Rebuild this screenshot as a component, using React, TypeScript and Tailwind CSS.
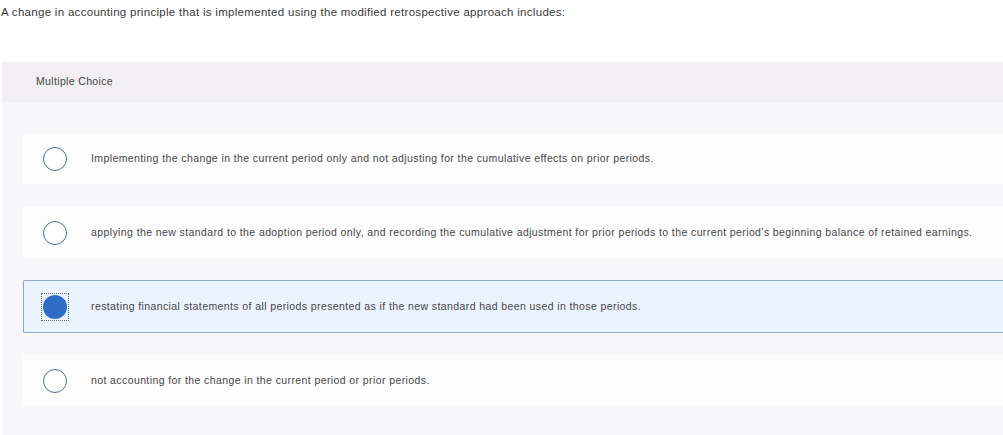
import React from "react";

const options = [
  "Implementing the change in the current period only and not adjusting for the cumulative effects on prior periods.",
  "applying the new standard to the adoption period only, and recording the cumulative adjustment for prior periods to the current period’s beginning balance of retained earnings.",
  "restating financial statements of all periods presented as if the new standard had been used in those periods.",
  "not accounting for the change in the current period or prior periods.",
];

const selected = 2;

function Radio({ checked }: { checked: boolean }) {
  if (checked) {
    return (
      <span className="flex h-[26px] w-[26px] shrink-0 items-center justify-center outline outline-1 outline-dotted outline-[#5a6d86]">
        <span className="block h-[24px] w-[24px] rounded-full bg-[#2f6dc4]" />
      </span>
    );
  }
  return (
    <span className="flex h-[26px] w-[26px] shrink-0 items-center justify-center">
      <span className="block h-[24px] w-[24px] rounded-full border-[1.5px] border-[#4e6d90] bg-white" />
    </span>
  );
}

export default function App() {
  return (
    <div
      className="h-[435px] w-full overflow-hidden bg-white text-[#3a3a3a]"
      style={{ fontFamily: "'Liberation Sans', Arial, sans-serif" }}
    >
      <p className="h-[62px] pl-[1px] pt-[4px] text-[11.5px] leading-[16px] tracking-[0.3px] text-[#3a3a3a]">
        A change in accounting principle that is implemented using the modified retrospective approach includes:
      </p>
      <div className="ml-[2px] h-[373px] bg-[#f7f6f8]">
        <div className="flex h-[40px] items-center bg-[#f1eff2] pl-[34px] text-[10.5px] tracking-[0.35px] text-[#444]">
          Multiple Choice
        </div>
        <div className="flex flex-col gap-[23px] pl-[21px] pt-[31px]">
          {options.map((text, i) => {
            const isSel = i === selected;
            return (
              <div
                key={i}
                className={
                  isSel
                    ? "flex h-[53px] items-center gap-[23px] rounded-l-[2px] border border-r-0 border-[#8fa7c4] bg-[#ebf3fd] pl-[18px] -my-[1px]"
                    : "flex h-[51px] items-center gap-[23px] bg-[#fcfcfd] pl-[19px]"
                }
              >
                <Radio checked={isSel} />
                <span className="whitespace-nowrap text-[10.5px] tracking-[0.4px] text-[#474747]">{text}</span>
              </div>
            );
          })}
        </div>
      </div>
    </div>
  );
}
